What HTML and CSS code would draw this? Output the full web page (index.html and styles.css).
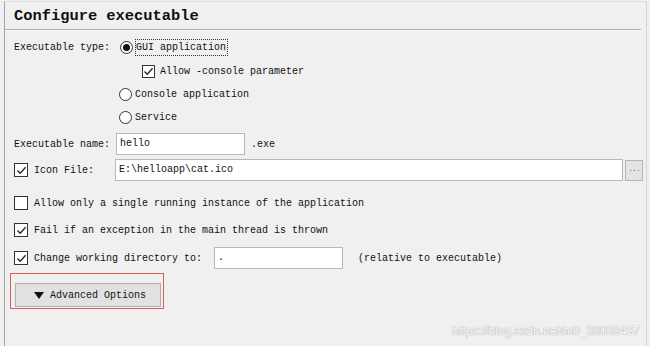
FILE: index.html
```html
<!DOCTYPE html>
<html>
	<head>
		<meta charset="UTF-8">
		<title>Configure executable</title>
		<link rel="stylesheet" href="styles.css">
	</head>
	<body>
		<div class="panel">
			<div class="header">Configure executable</div>

			<div class="row first">
				<span class="label">Executable type:</span>
				<span class="radio on"></span>
				<span class="opt focus">GUI application</span>
			</div>
			<div class="row sub tight2">
				<span class="check on"><svg width="11" height="11" viewBox="0 0 11 11"><path d="M1.5 5.5 L4.2 8.3 L9.6 2.2" fill="none" stroke="#222" stroke-width="1.3"/></svg></span>
				<span class="opt">Allow -console parameter</span>
			</div>
			<div class="row radio-row tight1">
				<span class="radio"></span>
				<span class="opt">Console application</span>
			</div>
			<div class="row radio-row tight1">
				<span class="radio"></span>
				<span class="opt">Service</span>
			</div>

			<div class="row gap5">
				<span class="label name-label">Executable name:</span>
				<span class="field short">hello</span>
				<span class="suffix">.exe</span>
			</div>
			<div class="row gap4">
				<span class="check on"><svg width="11" height="11" viewBox="0 0 11 11"><path d="M1.5 5.5 L4.2 8.3 L9.6 2.2" fill="none" stroke="#222" stroke-width="1.3"/></svg></span>
				<span class="label short-label">Icon File:</span>
				<span class="field wide">E:\helloapp\cat.ico</span>
				<span class="browse">...</span>
			</div>

			<div class="row gap11">
				<span class="check"></span>
				<span class="opt">Allow only a single running instance of the application</span>
			</div>
			<div class="row gap5">
				<span class="check on"><svg width="11" height="11" viewBox="0 0 11 11"><path d="M1.5 5.5 L4.2 8.3 L9.6 2.2" fill="none" stroke="#222" stroke-width="1.3"/></svg></span>
				<span class="opt">Fail if an exception in the main thread is thrown</span>
			</div>
			<div class="row gap6">
				<span class="check on"><svg width="11" height="11" viewBox="0 0 11 11"><path d="M1.5 5.5 L4.2 8.3 L9.6 2.2" fill="none" stroke="#222" stroke-width="1.3"/></svg></span>
				<span class="opt">Change working directory to:</span>
				<span class="field short dir">.</span>
				<span class="note">(relative to executable)</span>
			</div>

			<div class="highlight">
				<div class="advanced">
					<svg width="10" height="7" viewBox="0 0 10 7"><path d="M0 0 H10 L5 7 Z" fill="#111"/></svg>
					<span>Advanced Options</span>
				</div>
			</div>

			<div class="watermark">https://blog.csdn.net/m0_38039437</div>
		</div>
	</body>
</html>
```

FILE: styles.css
```css
html, body {
	margin: 0;
	padding: 0;
	background: #f0f0f0;
}
body {
	width: 650px;
	height: 346px;
	padding-top: 1px;
	box-sizing: border-box;
	overflow: hidden;
	font-family: "Liberation Mono", "DejaVu Sans Mono", monospace;
	font-size: 10px;
	color: #111;
}
.panel {
	position: relative;
	margin-left: 4px;
	margin-right: 3px;
	height: 345px;
	border-left: 1px solid #a6a6a6;
	border-right: 1px solid #d6d6d6;
	border-top: 1px solid #dcdcdc;
	box-sizing: border-box;
}
.header {
	height: 27px;
	margin-right: 5px;
	padding-left: 9px;
	line-height: 28px;
	font-size: 15.4px;
	font-weight: bold;
	color: #111;
	border-bottom: 1px solid #a8a8a8;
	box-shadow: 0 1px 0 #fdfdfd;
}
.row {
	display: flex;
	align-items: center;
	height: 22px;
	padding-left: 9px;
	white-space: pre;
}
.first { margin-top: 6px; }
.tight1 { margin-top: 1px; }
.tight2 { margin-top: 2px; }
.gap4 { margin-top: 4px; }
.gap5 { margin-top: 5px; }
.gap6 { margin-top: 6px; }
.gap11 { margin-top: 11px; }

.label {
	width: 106px;
}
.name-label {
	width: 102px;
}
.short-label {
	width: 81px;
}
.sub {
	padding-left: 137px;
}
.radio-row {
	padding-left: 114px;
}
.radio {
	width: 11px;
	height: 11px;
	border: 1px solid #333;
	border-radius: 50%;
	background: #fff;
	display: flex;
	align-items: center;
	justify-content: center;
	margin-right: 3px;
}
.radio.on::after {
	content: "";
	width: 7px;
	height: 7px;
	border-radius: 50%;
	background: #111;
}
.check {
	width: 12px;
	height: 12px;
	border: 1px solid #333;
	background: #fff;
	display: flex;
	align-items: center;
	justify-content: center;
	margin-right: 6px;
}
.sub .check {
	width: 11px;
	height: 11px;
	margin-right: 5px;
}
.check svg {
	display: block;
}
.opt.focus {
	outline: 1px dotted #333;
	outline-offset: 0;
	padding: 2px 1px 2px 0;
}
.field {
	height: 20px;
	line-height: 20px;
	border: 1px solid #b8b8b8;
	background: #fff;
	padding-left: 3px;
	box-sizing: content-box;
}
.field.short {
	width: 124px;
}
.field.wide {
	width: 503px;
}
.field.dir {
	margin-left: 12px;
}
.suffix {
	margin-left: 6px;
}
.note {
	margin-left: 15px;
}
.browse {
	width: 16px;
	height: 19px;
	margin-left: 2px;
	border: 1px solid #b4b4b4;
	background: #e3e3e3;
	color: #666;
	font-size: 8px;
	line-height: 16px;
	text-align: center;
	letter-spacing: -1px;
}
.highlight {
	margin-top: 4px;
	margin-left: 5px;
	width: 154px;
	height: 36px;
	border: 1px solid #e05a5a;
	display: flex;
	align-items: flex-end;
	padding: 0 0 1px 4px;
	box-sizing: border-box;
}
.advanced {
	width: 146px;
	height: 24px;
	border: 1px solid #b0b0b0;
	background: #e1e1e1;
	box-sizing: border-box;
	display: flex;
	align-items: center;
	justify-content: center;
	gap: 6px;
	padding-left: 4px;
	color: #111;
}
.watermark {
	position: absolute;
	right: 6px;
	bottom: 8px;
	font-family: "Liberation Sans", Arial, sans-serif;
	font-size: 12px;
	color: #fdfdfd;
	text-shadow: 0 0 1px #9a9a9a, 0 0 1px #b0b0b0;
}
```
